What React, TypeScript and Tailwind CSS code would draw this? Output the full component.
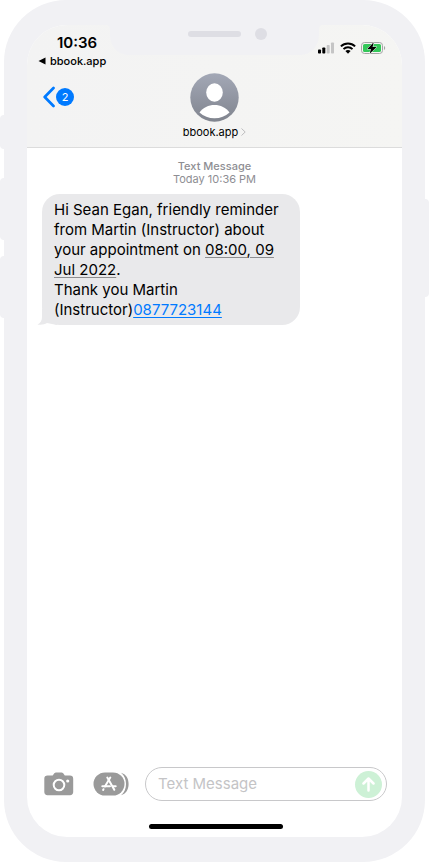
import { useState } from 'react';

/* ------------------------------------------------------------------ */
/*  Icons                                                              */
/* ------------------------------------------------------------------ */
function SignalIcon() {
  return (
    <svg width="17" height="12" viewBox="0 0 17 12" aria-hidden="true">
      <rect x="0" y="7.5" width="3" height="4" rx="0.8" />
      <rect x="4.3" y="5.5" width="3" height="6" rx="0.8" />
      <rect x="8.7" y="3" width="3" height="8.5" rx="0.8" fill="#c5c5c5" />
      <rect x="13" y="0.5" width="3" height="11" rx="0.8" fill="#c5c5c5" />
    </svg>
  );
}

function WifiIcon() {
  return (
    <svg width="16" height="12" viewBox="0 0 16 12" fill="none" stroke="#000" strokeWidth="2" aria-hidden="true">
      <path d="M0.9 4.4C4.8 0.5 11.2 0.5 15.1 4.4" />
      <path d="M3.5 7.1C6 4.7 10 4.7 12.5 7.1" />
      <path d="M5.4 9C6.9 7.7 9.1 7.7 10.6 9L8 11.7Z" fill="#000" stroke="none" />
    </svg>
  );
}

function BatteryIcon() {
  return (
    <svg width="25" height="12" viewBox="0 0 25 12" aria-hidden="true">
      <rect x="0.5" y="0.5" width="21" height="11" rx="3" fill="none" stroke="#a5a5a5" />
      <rect x="2" y="2" width="18" height="8" rx="1.6" fill="#34c759" />
      <path d="M23 4v4c1.6-.7 1.6-3.3 0-4Z" fill="#a5a5a5" />
      <path
        d="M12.7 0.3 6.2 6.900h3.700L8.700 11.700 15.600 5.100h-4Z"
        fill="#000"
        stroke="#f4f4f3"
        strokeWidth="1"
        paintOrder="stroke"
      />
    </svg>
  );
}

function AvatarIcon() {
  return (
    <svg width="49" height="49" viewBox="0 0 49 49" aria-hidden="true">
      <defs>
        <linearGradient id="avatar" x1="0" y1="0" x2="0" y2="1">
          <stop offset="0" stopColor="#a3a8b6" />
          <stop offset="1" stopColor="#80848e" />
        </linearGradient>
      </defs>
      <circle cx="24.5" cy="24.5" r="24.2" fill="url(#avatar)" />
      <ellipse cx="24.5" cy="19.5" rx="8.3" ry="9.3" fill="#fff" />
      <path d="M9.5 39.5C13 34.5 18.5 32 24.5 32s11.5 2.5 15 7.5C35.5 43.3 30.2 45.3 24.5 45.3S13.5 43.3 9.5 39.5Z" fill="#fff" />
    </svg>
  );
}

function CameraIcon() {
  return (
    <svg width="30" height="24" viewBox="0 0 30 24" aria-hidden="true">
      <path
        d="M3.5 3.5h5.200l1.600-2.200C10.800 0.700 11.300 0.500 12 0.500h5.500c.7 0 1.200.2 1.700.8l1.600 2.200h5.200c2 0 3.200 1.200 3.200 3.200v13.400c0 2-1.200 3.200-3.200 3.200H3.500c-2 0-3.200-1.200-3.200-3.200V6.700c0-2 1.200-3.200 3.200-3.200Z"
        fill="#9a9a9a"
      />
      <circle cx="15" cy="13" r="5.3" fill="none" stroke="#fff" strokeWidth="2" />
      <circle cx="23.7" cy="9" r="1.6" fill="#fff" />
    </svg>
  );
}

function AppStoreIcon() {
  return (
    <svg width="36" height="24" viewBox="0 0 36 24" fill="none" aria-hidden="true">
      <rect x="0.5" y="0.5" width="31" height="23" rx="11.5" fill="#9a9a9a" />
      <path
        d="M28 0.8C31.5 3.5 33 7.5 33 12s-1.500 8.500-5 11.200C33 21.800 35.600 17.500 35.600 12S33 2.200 28 0.800Z"
        fill="#9a9a9a"
        stroke="#fff"
        strokeWidth="1.8"
        paintOrder="stroke"
      />
      <g stroke="#fff" strokeWidth="2" strokeLinecap="round">
        <path d="M14.3 5.500l7 12.300" />
        <path d="M17.300 5.500l-5.400 8.900" />
        <path d="M9.300 14.200h7.700M20.200 14.200h2.500" />
        <path d="M10.500 17.200l-.4.700" />
      </g>
    </svg>
  );
}

/* ------------------------------------------------------------------ */
/*  Header                                                             */
/* ------------------------------------------------------------------ */
function Header() {
  return (
    <header className="border-b border-[#dcdcdc] bg-linear-to-r from-[#f3f3f3] to-[#f5f5f3] pt-2">
      <div className="flex items-start justify-between pr-4 pl-[11px]">
        <div className="flex flex-col">
          <time className="pl-[19px] text-[15px] leading-[19px] font-semibold">10:36</time>
          <a href="#bbook" className="mt-0.5 flex items-center gap-1 text-[11px] leading-[14px] font-medium">
            <svg width="8" height="8" viewBox="0 0 8 8" aria-hidden="true">
              <path d="M0.5 4 7.5 0.5v7Z" />
            </svg>
            bbook.app
          </a>
        </div>
        <div className="mt-[9px] flex items-center gap-[5px]">
          <SignalIcon />
          <WifiIcon />
          <BatteryIcon />
        </div>
      </div>

      <div className="grid grid-cols-[1fr_auto_1fr] items-start px-4 pt-[5px] pb-2">
        <button type="button" aria-label="Back, 2 unread" className="mt-[13px] flex items-center justify-self-start">
          <svg width="13" height="22" viewBox="0 0 13 22" fill="none" stroke="#007aff" strokeWidth="2.7" strokeLinecap="round" strokeLinejoin="round" aria-hidden="true">
            <path d="M10.5 2 1.7 11l8.800 9" />
          </svg>
          <span className="flex size-[18px] items-center justify-center rounded-full bg-[#007aff] text-[11px] leading-none text-white">
            2
          </span>
        </button>
        <button type="button" className="flex flex-col items-center">
          <AvatarIcon />
          <span className="mt-[3px] flex items-center gap-[3px] text-[11px] leading-[14px]">
            bbook.app
            <svg width="5" height="8" viewBox="0 0 5 8" fill="none" stroke="#bdbdbf" aria-hidden="true">
              <path d="M0.5 0.5 4.2 4 0.5 7.5" />
            </svg>
          </span>
        </button>
      </div>
    </header>
  );
}

/* ------------------------------------------------------------------ */
/*  Conversation                                                       */
/* ------------------------------------------------------------------ */
function Conversation() {
  return (
    <main className="flex-1 px-[15px] pt-3">
      <div className="text-center text-[11px] leading-[13px] text-[#8e8e93]">
        <p className="font-medium">Text Message</p>
        <p>Today 10:36 PM</p>
      </div>

      <div className="relative mt-2 w-[258px] rounded-[18px] bg-[#e9e9eb] px-3 pt-[6px] pb-[5px] text-[15px] leading-5">
        <svg className="absolute bottom-0 -left-[5px]" width="20" height="16" viewBox="0 0 20 16" aria-hidden="true">
          <path d="M5 0v8c0 3.500-1.500 6-4.500 7.500C4.500 16 7.500 15.500 10 14L20 16V0Z" fill="#e9e9eb" />
        </svg>
        <p className="relative">
          Hi Sean Egan, friendly reminder from Martin (Instructor) about your appointment on{' '}
          <a href="#event" className="underline decoration-[#8e8e90] decoration-1 underline-offset-2">
            08:00, 09 Jul 2022
          </a>
          .
        </p>
        <p className="relative">
          Thank you Martin (Instructor)
          <a href="tel:0877723144" className="text-[#007aff] underline decoration-1 underline-offset-2">
            0877723144
          </a>
        </p>
      </div>
    </main>
  );
}

/* ------------------------------------------------------------------ */
/*  Compose bar                                                        */
/* ------------------------------------------------------------------ */
function ComposeBar() {
  const [message, setMessage] = useState('');

  return (
    <footer className="pr-[15px] pb-2 pl-[17px]">
      <form className="flex items-center" onSubmit={(e) => e.preventDefault()}>
        <button type="button" aria-label="Camera">
          <CameraIcon />
        </button>
        <button type="button" aria-label="Apps" className="ml-[19px]">
          <AppStoreIcon />
        </button>
        <div className="ml-4 flex h-[34px] min-w-0 flex-1 items-center rounded-full border border-[#c8c8ca] pr-1 pl-3">
          <input
            type="text"
            aria-label="Text Message"
            placeholder="Text Message"
            value={message}
            onChange={(e) => setMessage(e.target.value)}
            className="min-w-0 flex-1 bg-transparent text-[15px] outline-none placeholder:text-[#c4c4c6]"
          />
          <button type="submit" aria-label="Send" className="flex size-[27px] items-center justify-center rounded-full bg-[#cdf1d6]">
            <svg width="13" height="15" viewBox="0 0 13 15" fill="none" stroke="#fff" strokeWidth="2.5" strokeLinecap="round" strokeLinejoin="round" aria-hidden="true">
              <path d="M6.5 13.5v-12M1.5 6.500l5-5 5 5" />
            </svg>
          </button>
        </div>
      </form>
      <div className="mx-auto mt-[23px] h-[5px] w-[134px] rounded-full bg-black" />
    </footer>
  );
}

/* ------------------------------------------------------------------ */
/*  Phone                                                              */
/* ------------------------------------------------------------------ */
function Notch() {
  return (
    <div className="absolute inset-x-0 top-0 flex justify-center">
      <svg width="217" height="30" viewBox="0 0 217 30" aria-hidden="true">
        <path d="M0 0c2.500 0 4 1.500 4 4v6c0 11 8 20 19 20h171c11 0 19-9 19-20V4c0-2.500 1.500-4 4-4Z" fill="#f1f1f4" />
        <rect x="82" y="6" width="53" height="6" rx="3" fill="#dedee4" />
        <circle cx="155" cy="9" r="6" fill="#dedee4" />
      </svg>
    </div>
  );
}

export default function App() {
  return (
    <div className="flex min-h-screen bg-white px-1 font-['Inter','Liberation_Sans',sans-serif] text-black">
      <div className="relative flex min-w-0 flex-1 rounded-[62px] bg-[#f1f1f4] px-[23px] py-[25px]">
        <span className="absolute top-[115px] -left-1 h-[34px] w-1 rounded-l-[4px] bg-[#f1f1f4]" />
        <span className="absolute top-[178px] -left-1 h-[62px] w-1 rounded-l-[4px] bg-[#f1f1f4]" />
        <span className="absolute top-[256px] -left-1 h-[62px] w-1 rounded-l-[4px] bg-[#f1f1f4]" />
        <span className="absolute top-[199px] -right-1 h-[98px] w-1 rounded-r-[4px] bg-[#f1f1f4]" />
        <div className="relative flex min-w-0 flex-1 flex-col overflow-hidden rounded-[40px] bg-white">
          <Header />
          <Conversation />
          <ComposeBar />
          <Notch />
        </div>
      </div>
    </div>
  );
}
